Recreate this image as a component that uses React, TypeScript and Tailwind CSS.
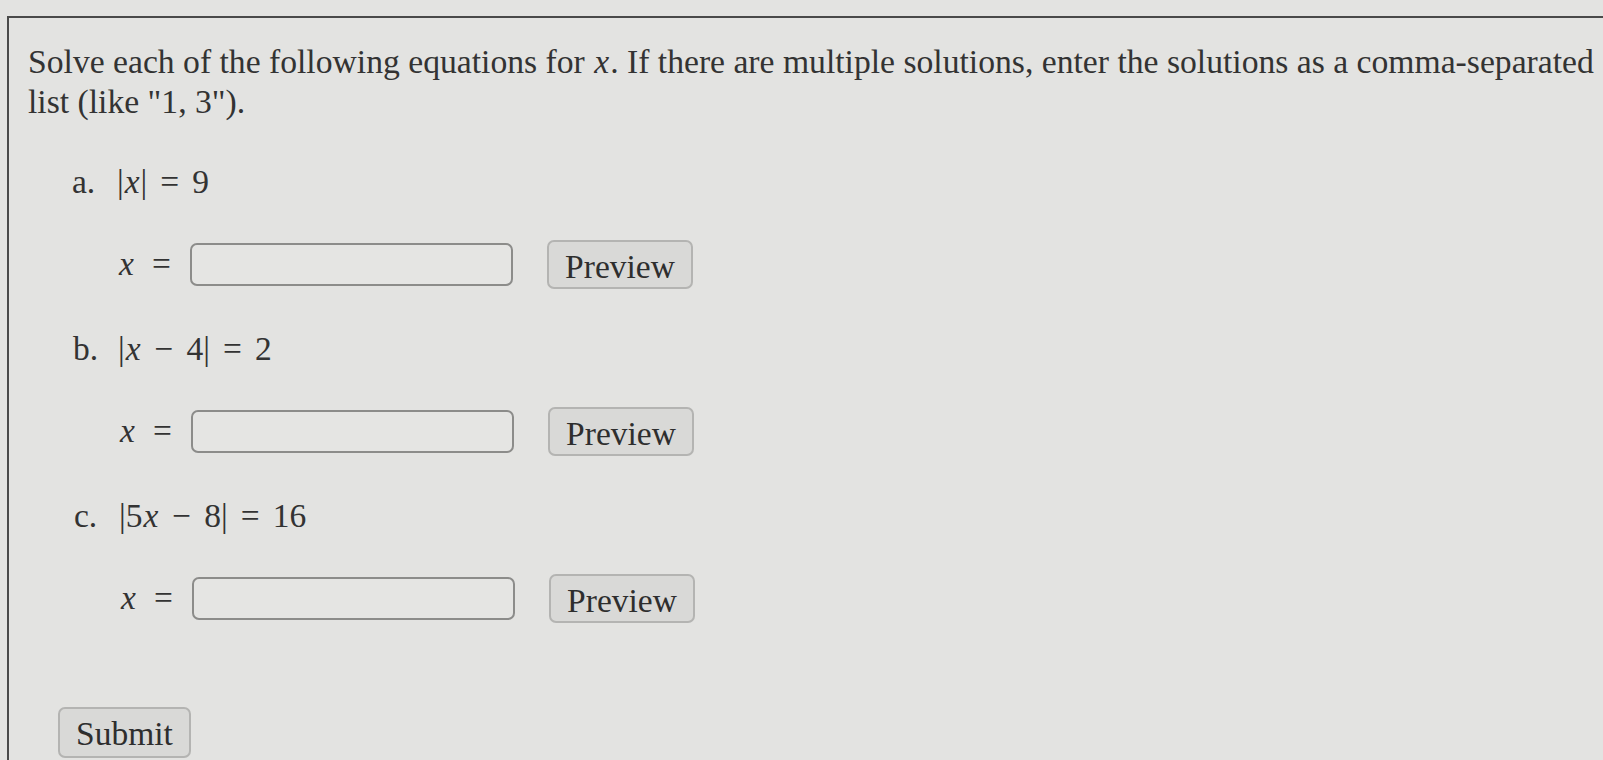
import React from 'react';

const serif = { fontFamily: '"Liberation Serif", "Times New Roman", serif' };

function X() {
  return <span className="italic px-[1px]">x</span>;
}

function Op({ children }: { children: React.ReactNode }) {
  return <span className="mx-[13px]">{children}</span>;
}

function Answer({ shift = 0 }: { shift?: number }) {
  return (
    <div className="flex items-center h-[50px]" style={{ marginLeft: shift }}>
      <span className="w-[74px] pl-[2px] text-[33.5px] flex items-center">
        <X />
        <span className="ml-[17px]">=</span>
      </span>
      <input className="w-[323px] h-[43px] rounded-[7px] border-2 border-[#8c8c8a] bg-[#e5e5e3] outline-none" />
      <button className="ml-[34px] h-[49px] w-[146px] rounded-[7px] border-2 border-[#b4b4b2] bg-[#d9d9d7] text-[33.5px] text-[#2e2e2e]">
        Preview
      </button>
    </div>
  );
}

function Part({ label, children, shift = 0 }: { label: string; children: React.ReactNode; shift?: number }) {
  return (
    <div className="flex flex-col">
      <div className="flex items-center h-[40px] text-[33.5px]" style={{ marginLeft: shift }}>
        <span className="w-[45px]">{label}</span>
        <span className="flex items-center">{children}</span>
      </div>
      <div className="mt-[37px] ml-[44px]">
        <Answer shift={shift} />
      </div>
    </div>
  );
}

export default function App() {
  return (
    <div className="h-[760px] w-[1603px] overflow-hidden bg-[#e3e3e1] text-[#333333]" style={serif}>
      <div className="ml-[7px] mt-[16px] h-[760px] border-l-2 border-t-2 border-[#4a4a4a] pl-[19px] pt-[24px]">
        <p className="text-[33.65px] leading-[40px] whitespace-nowrap">
          Solve each of the following equations for <X />. If there are multiple solutions, enter the solutions as a comma-separated
          <br />
          list (like "1, 3").
        </p>
        <div className="mt-[40px] ml-[44px] flex flex-col gap-[40px]">
          <Part label="a.">
            |<X />|<Op>=</Op>9
          </Part>
          <Part label="b." shift={1}>
            |<X /><Op>−</Op>4|<Op>=</Op>2
          </Part>
          <Part label="c." shift={2}>
            |5<X /><Op>−</Op>8|<Op>=</Op>16
          </Part>
        </div>
        <button className="mt-[84px] ml-[30px] h-[51px] w-[133px] rounded-[7px] border-2 border-[#b4b4b2] bg-[#d9d9d7] text-[33.5px] text-[#2e2e2e]">
          Submit
        </button>
      </div>
    </div>
  );
}
